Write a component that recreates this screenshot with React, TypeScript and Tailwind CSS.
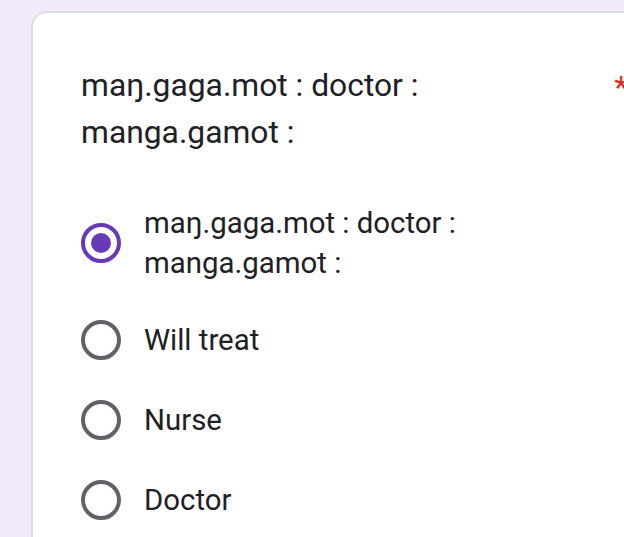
const options = [
  { label: 'maŋ.gaga.mot : doctor :\nmanga.gamot :', checked: true },
  { label: 'Will treat', checked: false },
  { label: 'Nurse', checked: false },
  { label: 'Doctor', checked: false },
];

function Radio({ checked }: { checked: boolean }) {
  return (
    <span
      className={`flex h-[40px] w-[40px] shrink-0 items-center justify-center rounded-full border-[4px] ${
        checked ? 'border-[#673ab7]' : 'border-[#5f6368]'
      }`}
    >
      {checked && <span className="h-[20px] w-[20px] rounded-full bg-[#673ab7]" />}
    </span>
  );
}

export default function App() {
  return (
    <div
      className="h-[537px] w-[624px] overflow-hidden bg-[#f3eafc] pl-[31px] pt-[11px]"
      style={{ fontFamily: 'Roboto, "Liberation Sans", sans-serif' }}
    >
      <div className="w-[660px] rounded-tl-[16px] border-l-2 border-t-2 border-[#dadce0] bg-white pl-[48px] pt-[49px]">
        <div className="flex w-[547px] justify-between text-[31.8px] leading-[47px] text-[#202124]">
          <div>
            maŋ.gaga.mot : doctor :
            <br />
            manga.gamot :
          </div>
          <span className="pt-[2px] text-[#d93025]">*</span>
        </div>
        <div className="mt-[27px] flex flex-col">
          {options.map((o, i) => (
            <label
              key={o.label}
              className={`flex items-center gap-[23px] pt-[20px] ${i === 0 ? 'pb-[17px]' : 'pb-[20px]'}`}
            >
              <Radio checked={o.checked} />
              <span className="whitespace-pre-line text-[29.4px] leading-[40px] text-[#202124]">
                {o.label}
              </span>
            </label>
          ))}
        </div>
      </div>
    </div>
  );
}
